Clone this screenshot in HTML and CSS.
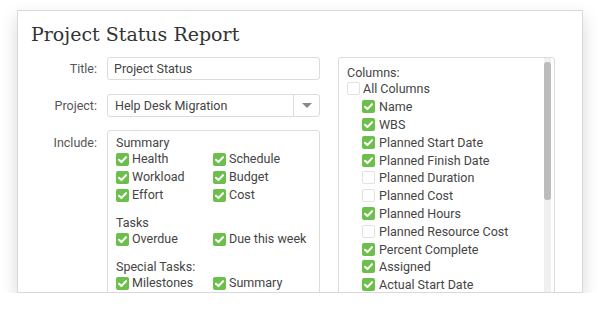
FILE: index.html
```html
<!DOCTYPE html>
<html>
<head>
<meta charset="utf-8">
<link rel="stylesheet" href="styles.css">
</head>
<body>
<div class="card">
  <h1 class="title">Project Status Report</h1>
  <div class="content">
    <div class="form">
      <div class="label">Title:</div>
      <div class="input">Project Status</div>
      <div class="label">Project:</div>
      <div class="select"><span class="select-text">Help Desk Migration</span><span class="select-btn"><span class="arrow"></span></span></div>
      <div class="label">Include:</div>
      <div class="include">
        <div class="group">
          <div class="heading">Summary</div>
          <div class="grid">
            <div class="opt"><span class="cb on"></span>Health</div>
            <div class="opt"><span class="cb on"></span>Schedule</div>
            <div class="opt"><span class="cb on"></span>Workload</div>
            <div class="opt"><span class="cb on"></span>Budget</div>
            <div class="opt"><span class="cb on"></span>Effort</div>
            <div class="opt"><span class="cb on"></span>Cost</div>
          </div>
        </div>
        <div class="group">
          <div class="heading">Tasks</div>
          <div class="grid">
            <div class="opt"><span class="cb on"></span>Overdue</div>
            <div class="opt"><span class="cb on"></span>Due this week</div>
          </div>
        </div>
        <div class="group">
          <div class="heading">Special Tasks:</div>
          <div class="grid">
            <div class="opt"><span class="cb on"></span>Milestones</div>
            <div class="opt"><span class="cb on"></span>Summary</div>
          </div>
        </div>
      </div>
    </div>
    <div class="columns">
      <div class="list">
        <div class="row head">Columns:</div>
        <div class="row all"><span class="cb"></span>All Columns</div>
        <div class="row item"><span class="cb on"></span>Name</div>
        <div class="row item"><span class="cb on"></span>WBS</div>
        <div class="row item"><span class="cb on"></span>Planned Start Date</div>
        <div class="row item"><span class="cb on"></span>Planned Finish Date</div>
        <div class="row item"><span class="cb"></span>Planned Duration</div>
        <div class="row item"><span class="cb"></span>Planned Cost</div>
        <div class="row item"><span class="cb on"></span>Planned Hours</div>
        <div class="row item"><span class="cb"></span>Planned Resource Cost</div>
        <div class="row item"><span class="cb on"></span>Percent Complete</div>
        <div class="row item"><span class="cb on"></span>Assigned</div>
        <div class="row item"><span class="cb on"></span>Actual Start Date</div>
      </div>
      <div class="scrollbar"><div class="thumb"></div></div>
    </div>
  </div>
</div>
</body>
</html>
```
FILE: styles.css
```css
html, body {
  margin: 0;
  padding: 0;
  background: #ffffff;
}
body {
  font-family: Roboto, "Liberation Sans", sans-serif;
  font-size: 12.5px;
  color: #444;
}
.card {
  margin: 10px 0 0 17px;
  width: 564px;
  height: 281px;
  border: 1px solid #d9d9d9;
  background: #fff;
  box-shadow: 0 7px 16px rgba(0, 0, 0, 0.16);
  overflow: hidden;
}
.title {
  margin: 0;
  padding: 11px 0 0 13px;
  height: 35px;
  font-family: "DejaVu Serif", serif;
  font-weight: normal;
  font-size: 19px;
  line-height: 25px;
  color: #333;
}
.content {
  display: flex;
  align-items: flex-start;
}
.form {
  display: grid;
  grid-template-columns: 79px 213px;
  column-gap: 10px;
  row-gap: 14px;
  align-items: start;
}
.label {
  text-align: right;
  line-height: 23px;
  color: #555;
}
.input, .select {
  height: 21px;
  border: 1px solid #dcdcdc;
  border-radius: 3px;
  line-height: 21px;
  padding-left: 6px;
  color: #444;
}
.select {
  display: flex;
  padding-left: 0;
}
.select-text {
  flex: 1;
  padding-left: 7px;
}
.select-btn {
  width: 25px;
  border-left: 1px solid #dcdcdc;
  display: flex;
  align-items: center;
  justify-content: center;
}
.arrow {
  width: 0;
  height: 0;
  border-left: 5px solid transparent;
  border-right: 5px solid transparent;
  border-top: 5px solid #888;
}
.include {
  margin-top: -1px;
  height: 200px;
  border: 1px solid #dcdcdc;
  border-radius: 3px;
  padding: 5px 0 0 8px;
}
.group {
  margin-bottom: 12px;
}
.heading {
  height: 14px;
  line-height: 14px;
}
.grid {
  display: grid;
  grid-template-columns: 97px 100px;
}
.opt {
  display: flex;
  align-items: center;
  height: 18px;
  line-height: 18px;
  white-space: nowrap;
}
.cb {
  flex: none;
  width: 13px;
  height: 13px;
  box-sizing: border-box;
  border-radius: 2px;
  margin-right: 3px;
  border: 1px solid #e2e2e2;
  background: #fff;
}
.cb.on {
  border: none;
  background: #6cbf4a url("data:image/svg+xml;utf8,<svg xmlns='http://www.w3.org/2000/svg' viewBox='0 0 13 13'><path d='M3 6.8 L5.4 9.1 L10 4.2' fill='none' stroke='white' stroke-width='2.1' stroke-linecap='round' stroke-linejoin='round'/></svg>") center / 13px 13px no-repeat;
}
.columns {
  margin-left: 18px;
  width: 215px;
  height: 300px;
  border: 1px solid #dcdcdc;
  border-radius: 3px;
  display: flex;
}
.list {
  flex: 1;
  padding: 6px 0 0 8px;
}
.row {
  display: flex;
  align-items: center;
  height: 17.8px;
  white-space: nowrap;
}
.row.head {
  height: 16px;
}
.row.item {
  padding-left: 15px;
}
.row.item .cb {
  margin-right: 4px;
}
.row.all .cb {
  margin-right: 3px;
}
.scrollbar {
  width: 7px;
  margin-right: 3px;
  padding-top: 4px;
  background: #f0f0f0;
}
.thumb {
  height: 138px;
  background: #bcbcbc;
  border-radius: 3px;
}
```
